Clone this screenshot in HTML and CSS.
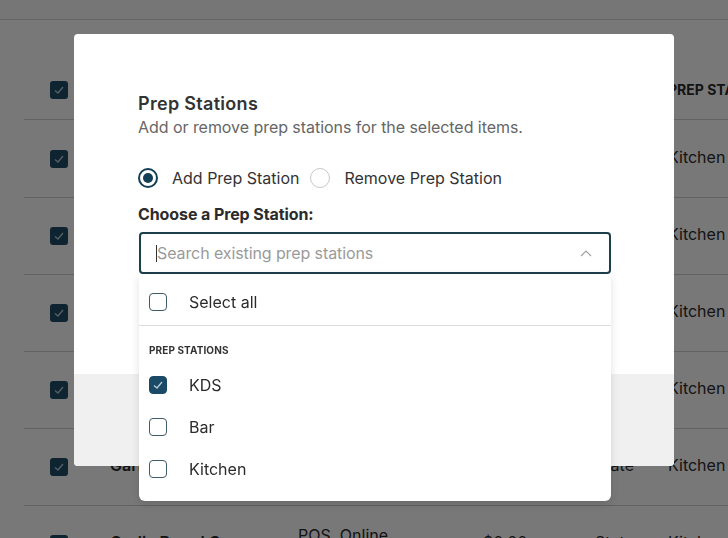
FILE: index.html
```html
<!DOCTYPE html>
<html lang="en">
<head>
<meta charset="utf-8">
<title>Prep Stations</title>
<link rel="stylesheet" href="styles.css">
</head>
<body>
<div class="page">
  <div class="topbar"></div>
  <div class="table">
    <div class="row head">
      <div class="c-check"><span class="cb on"><svg viewBox="0 0 18 18"><polyline points="5,9.5 8,12 13,6"/></svg></span></div>
      <div class="c-name">ITEM NAME</div>
      <div class="c-chan">VISIBILITY</div>
      <div class="c-price">PRICE</div>
      <div class="c-stat">STATUS</div>
      <div class="c-prep">PREP STATIONS</div>
    </div>
    <div class="row">
      <div class="c-check"><span class="cb on"><svg viewBox="0 0 18 18"><polyline points="5,9.5 8,12 13,6"/></svg></span></div>
      <div class="c-name bold">Caesar Salad</div>
      <div class="c-chan">POS, Online</div>
      <div class="c-price">$9.00</div>
      <div class="c-stat">State</div>
      <div class="c-prep">Kitchen</div>
    </div>
    <div class="row">
      <div class="c-check"><span class="cb on"><svg viewBox="0 0 18 18"><polyline points="5,9.5 8,12 13,6"/></svg></span></div>
      <div class="c-name bold">Chicken Wings</div>
      <div class="c-chan">POS, Online</div>
      <div class="c-price">$12.00</div>
      <div class="c-stat">State</div>
      <div class="c-prep">Kitchen</div>
    </div>
    <div class="row">
      <div class="c-check"><span class="cb on"><svg viewBox="0 0 18 18"><polyline points="5,9.5 8,12 13,6"/></svg></span></div>
      <div class="c-name bold">Fries</div>
      <div class="c-chan">POS, Online</div>
      <div class="c-price">$4.00</div>
      <div class="c-stat">State</div>
      <div class="c-prep">Kitchen</div>
    </div>
    <div class="row">
      <div class="c-check"><span class="cb on"><svg viewBox="0 0 18 18"><polyline points="5,9.5 8,12 13,6"/></svg></span></div>
      <div class="c-name bold">Burger</div>
      <div class="c-chan">POS, Online</div>
      <div class="c-price">$14.00</div>
      <div class="c-stat">State</div>
      <div class="c-prep">Kitchen</div>
    </div>
    <div class="row">
      <div class="c-check"><span class="cb on"><svg viewBox="0 0 18 18"><polyline points="5,9.5 8,12 13,6"/></svg></span></div>
      <div class="c-name bold">Garlic Knots</div>
      <div class="c-chan">POS, Online</div>
      <div class="c-price">$5.00</div>
      <div class="c-stat">State</div>
      <div class="c-prep">Kitchen</div>
    </div>
    <div class="row">
      <div class="c-check"><span class="cb on"><svg viewBox="0 0 18 18"><polyline points="5,9.5 8,12 13,6"/></svg></span></div>
      <div class="c-name bold">Garlic Bread C…</div>
      <div class="c-chan">POS, Online<br>Ordering</div>
      <div class="c-price">$0.00</div>
      <div class="c-stat">State</div>
      <div class="c-prep">Kitchen</div>
    </div>
  </div>
</div>

<div class="overlay"></div>

<div class="modal">
  <div class="modal-body">
    <h2 class="title">Prep Stations</h2>
    <p class="subtitle">Add or remove prep stations for the selected items.</p>
    <div class="radios">
      <label class="radio"><span class="dot on"></span>Add Prep Station</label>
      <label class="radio"><span class="dot"></span>Remove Prep Station</label>
    </div>
    <div class="field-label">Choose a Prep Station:</div>
    <div class="combo">
      <div class="input">
        <span class="caret"></span>
        <span class="placeholder">Search existing prep stations</span>
        <svg class="chev" viewBox="0 0 12 7"><polyline points="1,6 6,1 11,6"/></svg>
      </div>
      <div class="menu">
        <div class="menu-top">
          <div class="opt"><span class="box"></span>Select all</div>
        </div>
        <div class="group">PREP STATIONS</div>
        <div class="opt"><span class="box on"><svg viewBox="0 0 18 18"><polyline points="5,9.5 8,12 13,6"/></svg></span>KDS</div>
        <div class="opt"><span class="box"></span>Bar</div>
        <div class="opt"><span class="box"></span>Kitchen</div>
      </div>
    </div>
  </div>
  <div class="modal-foot"></div>
</div>
</body>
</html>
```

FILE: styles.css
```css
* { box-sizing: border-box; }
html, body { margin: 0; padding: 0; }
body {
  width: 728px;
  height: 538px;
  overflow: hidden;
  background: #fff;
  font-family: Inter, "Noto Sans", sans-serif;
  color: #2b2b2b;
}

.page { width: 900px; }
.topbar { height: 20px; border-bottom: 1px solid #d6d6d6; background: #fafafa; }

.table { margin-left: 24px; padding-top: 40px; }
.row {
  display: grid;
  grid-template-columns: 60px 188px 185px 112px 73px 1fr;
  align-items: center;
  height: 77px;
  padding-left: 26px;
  border-top: 1px solid #d0d0d0;
  font-size: 16px;
  white-space: nowrap;
}
.row > div:not(.c-check) { padding-bottom: 4px; }
.row.head { height: 60px; border-top: none; border-bottom: 1px solid #d0d0d0; font-size: 14px; font-weight: 700; }
.row.head > div:not(.c-check) { padding-bottom: 0; }
.row.head + .row { border-top: none; }
.bold { font-weight: 600; }
.row .c-chan { line-height: 20px; padding-top: 6px; }

.cb {
  display: block; width: 18px; height: 18px; border-radius: 3px;
  background: #1f4d66;
}
.cb svg, .box svg { display: block; width: 18px; height: 18px; }
.cb polyline, .box polyline { fill: none; stroke: #b9cdd8; stroke-width: 1.3; }

.overlay { position: fixed; inset: 0; background: rgba(0,0,0,0.53); }

.modal {
  position: fixed; left: 74px; top: 34px; width: 600px;
  background: #fff; border-radius: 4px; overflow: visible;
}
.modal-body { height: 340px; padding: 59px 64px 0; }
.modal-foot { height: 92px; background: #f0f0f0; border-radius: 0 0 4px 4px; }

.title { margin: 0; font-size: 18px; line-height: 22px; font-weight: 600; color: #333; letter-spacing: 0.3px; }
.subtitle { margin: 2px 0 0; font-size: 16px; line-height: 20px; color: #666; letter-spacing: -0.05px; }

.radios { display: flex; gap: 11px; margin-top: 29px; height: 24px; align-items: center; }
.radio { display: flex; align-items: center; gap: 14px; font-size: 16px; color: #333; }
.dot {
  width: 20px; height: 20px; border-radius: 50%;
  border: 1.5px solid #c8c8c8; position: relative;
}
.dot.on { border: 2px solid #123f55; }
.dot.on::after {
  content: ""; position: absolute; left: 3px; top: 3px; width: 10px; height: 10px;
  border-radius: 50%; background: #123f55;
}

.field-label { margin-top: 14px; font-size: 16px; line-height: 20px; font-weight: 700; color: #2b2b2b; letter-spacing: -0.1px; }

.combo { position: relative; margin-top: 8px; width: 472px; margin-left: 1px; }
.input {
  height: 42px; border: 2px solid #1d3e4b; border-radius: 4px;
  display: flex; align-items: center; padding: 0 15px;
}
.caret { width: 1px; height: 17px; background: #333; margin-right: 0; }
.placeholder { flex: 1; font-size: 16px; color: #9a9a9a; letter-spacing: -0.1px; }
.chev { width: 12px; height: 7px; margin-right: 2px; }
.chev polyline { fill: none; stroke: #a0a0a0; stroke-width: 1.2; }

.menu {
  position: absolute; left: 0; right: 0; top: 42px;
  background: #fff; border-radius: 0 0 6px 6px;
  box-shadow: 0 3px 8px rgba(0,0,0,0.12);
  padding-bottom: 11px; z-index: 2;
}
.menu-top { padding: 7px 0 2px; border-bottom: 1px solid #dedede; }
.opt {
  display: flex; align-items: center; height: 42px; padding-left: 10px;
  font-size: 16px; color: #2b2b2b; gap: 22px;
}
.box {
  display: block; width: 18px; height: 18px; border-radius: 4px;
  border: 1.5px solid #3f5a68;
}
.box.on { background: #1b4a66; border-color: #1b4a66; }
.box.on svg { margin: -1.5px; }
.group {
  padding: 18px 10px 8px; font-size: 10px; line-height: 12px; font-weight: 700;
  color: #333; letter-spacing: 0.1px;
}
```
